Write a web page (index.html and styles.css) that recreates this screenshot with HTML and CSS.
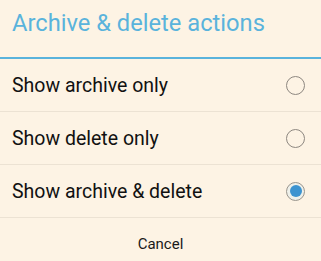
FILE: index.html
```html
<!DOCTYPE html>
<html>
<head>
<meta charset="utf-8">
<link rel="stylesheet" href="styles.css">
</head>
<body>
<div class="dialog">
  <div class="title">Archive &amp; delete actions</div>
  <div class="rule"></div>
  <div class="row"><span class="label">Show archive only</span><span class="radio"></span></div>
  <div class="row"><span class="label">Show delete only</span><span class="radio"></span></div>
  <div class="row"><span class="label">Show archive &amp; delete</span><span class="radio checked"><span class="dot"></span></span></div>
  <div class="cancel">Cancel</div>
</div>
</body>
</html>
```
FILE: styles.css
```css
html, body {
  margin: 0;
  padding: 0;
  background: #fdf3e4;
}
.dialog {
  width: 321px;
  height: 261px;
  background: #fdf3e4;
  font-family: Roboto, "Liberation Sans", sans-serif;
  display: flex;
  flex-direction: column;
}
.title {
  height: 57px;
  box-sizing: border-box;
  padding: 7px 0 0 12px;
  font-size: 23.7px;
  line-height: 32px;
  color: #5ab3dc;
}
.rule {
  height: 2px;
  background: #5ab3dc;
}
.row {
  height: 52px;
  border-bottom: 1px solid #ece2d3;
  display: flex;
  align-items: center;
  justify-content: space-between;
  padding: 0 16px 0 12px;
}
.label {
  font-size: 19.5px;
  color: #111;
}
.radio {
  width: 17px;
  height: 17px;
  border: 1.5px solid #8d8780;
  border-radius: 50%;
  display: flex;
  align-items: center;
  justify-content: center;
}
.radio.checked {
  background: #eef0ea;
  border-color: #9a958d;
}
.dot {
  width: 12px;
  height: 12px;
  border-radius: 50%;
  background: #3c93d0;
}
.cancel {
  flex: 1;
  display: flex;
  align-items: center;
  justify-content: center;
  padding-top: 8px;
  font-size: 15px;
  color: #1a1a1a;
}
```
